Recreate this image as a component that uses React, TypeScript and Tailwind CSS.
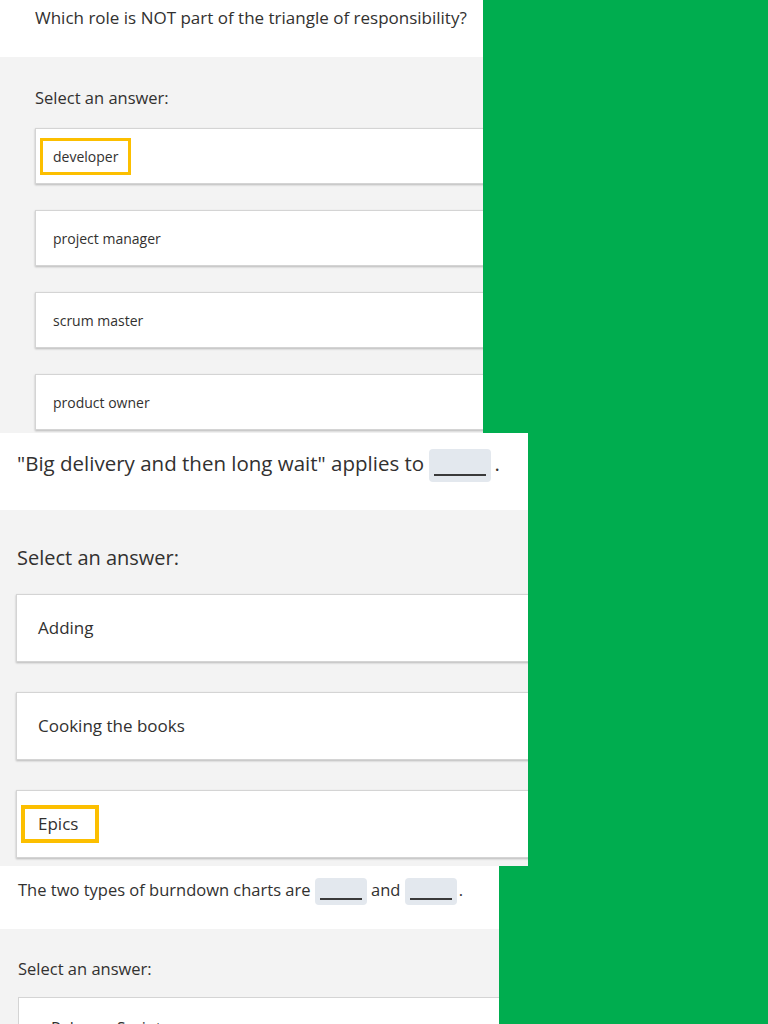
import React from 'react'

const font = { fontFamily: '"Open Sans", "Noto Sans", Arial, sans-serif' }

function Blank({ className, line }: { className: string; line: string }) {
  return (
    <span className={`inline-flex items-end justify-center rounded-[4px] bg-[#e3e8ee] align-middle ${className}`}>
      <span className={`block border-b-[2px] border-[#3a3a3a] ${line}`} />
    </span>
  )
}

function Option({
  label,
  selected,
  box,
  mark,
}: {
  label: string
  selected?: boolean
  box: string
  mark: string
}) {
  return (
    <div className={`flex items-center border border-[#d4d4d4] bg-white shadow-[0_1px_2px_rgba(0,0,0,0.25)] ${box}`}>
      <span className={`border-solid ${selected ? 'border-[#fcbf00]' : 'border-transparent'} ${mark}`}>{label}</span>
    </div>
  )
}

export default function App() {
  return (
    <div className="h-[1024px] w-[768px] overflow-hidden bg-[#00ad4f] text-[#323130]" style={font}>
      <div className="flex flex-col items-start">
        {/* first quiz card */}
        <section className="flex h-[433px] w-[483px] flex-col overflow-hidden">
          <div className="h-[57px] whitespace-nowrap bg-white pl-[35px] pt-[5px] text-[17px] leading-[26px]">
            Which role is NOT part of the triangle of responsibility?
          </div>
          <div className="flex flex-1 flex-col bg-[#f3f3f3] pl-[35px]">
            <p className="pt-[29px] text-[16.5px] leading-[24px]">Select an answer:</p>
            <div className="mt-[18px] flex w-[460px] flex-col gap-[26px]">
              {['developer', 'project manager', 'scrum master', 'product owner'].map((o, i) => (
                <Option
                  key={o}
                  label={o}
                  selected={i === 0}
                  box="h-[56px] pl-[4px]"
                  mark="border-[3px] px-[10px] py-[6px] text-[14px] leading-[19px]"
                />
              ))}
            </div>
          </div>
        </section>

        {/* second quiz card */}
        <section className="flex h-[433px] w-[528px] flex-col overflow-hidden">
          <div className="h-[77px] whitespace-nowrap bg-white pl-[17px] pt-[14px] text-[20.5px] leading-[32px]">
            "Big delivery and then long wait" applies to{' '}
            <Blank className="h-[33px] w-[62px] pb-[6px]" line="w-[52px]" />
            <span className="ml-[3px]">.</span>
          </div>
          <div className="flex flex-1 flex-col bg-[#f3f3f3] pl-[16px]">
            <p className="pl-[1px] pt-[34px] text-[20px] leading-[28px]">Select an answer:</p>
            <div className="mt-[22px] flex w-[520px] flex-col gap-[30px]">
              {['Adding', 'Cooking the books', 'Epics'].map((o, i) => (
                <Option
                  key={o}
                  label={o}
                  selected={i === 2}
                  box="h-[68px] pl-[4px]"
                  mark="border-[4px] pl-[13px] pr-[17px] py-[5px] text-[17px] leading-[20px]"
                />
              ))}
            </div>
          </div>
        </section>

        {/* third quiz card, cut off */}
        <section className="flex h-[158px] w-[499px] flex-col overflow-hidden">
          <div className="h-[63px] shrink-0 whitespace-nowrap bg-white pl-[18px] pt-[10px] text-[16.5px] leading-[27px]">
            The two types of burndown charts are{' '}
            <Blank className="h-[27px] w-[52px] pb-[5px]" line="w-[42px]" /> and{' '}
            <Blank className="h-[27px] w-[52px] pb-[5px]" line="w-[42px]" />
            <span className="ml-[2px]">.</span>
          </div>
          <div className="flex flex-1 flex-col bg-[#f3f3f3] pl-[18px]">
            <p className="pt-[28px] text-[16.5px] leading-[24px]">Select an answer:</p>
            <div className="mt-[16px] w-[490px]">
              <div className="h-[60px] border border-[#d4d4d4] bg-white pl-[32px] pt-[19px] text-[16px] leading-[22px]">
                Release, Sprint
              </div>
            </div>
          </div>
        </section>
      </div>
    </div>
  )
}
